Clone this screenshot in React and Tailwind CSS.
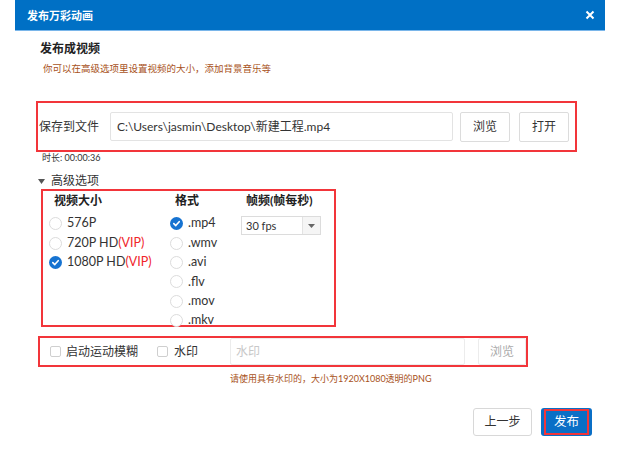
import React from "react";

const RED = "border-[#f2353a]";

function Radio({ checked }) {
  if (checked) {
    return (
      <span className="w-[13px] h-[13px] rounded-full bg-[#1673d1] flex items-center justify-center shrink-0">
        <svg width="9" height="9" viewBox="0 0 10 10">
          <path d="M2 5.2 L4.2 7.3 L8 3" stroke="white" strokeWidth="1.8" fill="none" strokeLinecap="round" strokeLinejoin="round" />
        </svg>
      </span>
    );
  }
  return <span className="w-[13px] h-[13px] rounded-full border border-[#dcdcdc] bg-white shrink-0" />;
}

function Row({ checked, children }) {
  return (
    <div className="h-[19.4px] flex items-center gap-[5px] text-[12.5px] text-[#333]">
      <Radio checked={checked} />
      <span className="leading-none">{children}</span>
    </div>
  );
}

export default function App() {
  return (
    <div
      className="w-[620px] h-[450px] bg-white overflow-hidden flex flex-col"
      style={{ fontFamily: 'Lato, "Noto Sans CJK SC", sans-serif' }}
    >
      {/* header */}
      <div className="mx-[15px] h-[31px] bg-[#0070c5] border-b border-[#7ab6ea] flex items-center justify-between pl-[12px] pr-[10px] shrink-0">
        <span className="text-white text-[11px] font-bold leading-none">发布万彩动画</span>
        <svg width="10" height="10" viewBox="0 0 10 10">
          <path d="M1.5 1.5 L8.5 8.5 M8.5 1.5 L1.5 8.5" stroke="white" strokeWidth="2" />
        </svg>
      </div>

      <div className="ml-[40px] mt-[9px] text-[12px] font-bold leading-[18px] text-[#222]">发布成视频</div>
      <div className="ml-[43px] mt-[3px] text-[9.5px] leading-[16px] text-[#a8521b]">
        你可以在高级选项里设置视频的大小，添加背景音乐等
      </div>

      {/* save box */}
      <div className={`ml-[36px] mt-[24px] w-[541px] h-[51px] border-2 ${RED} flex items-center pl-[1px] shrink-0`}>
        <span className="text-[12px] text-[#333] w-[71px] leading-none">保存到文件</span>
        <div className="w-[343px] h-[29px] border border-[#e3e3e3] rounded-[2px] flex items-center pl-[6px] text-[12px] text-[#333]">
          C:\Users\jasmin\Desktop\新建工程.mp4
        </div>
        <div className="ml-[7px] w-[50px] h-[30px] border border-[#dcdcdc] rounded-[2px] flex items-center justify-center text-[12px] text-[#333]">
          浏览
        </div>
        <div className="ml-[9px] w-[50px] h-[30px] border border-[#dcdcdc] rounded-[2px] flex items-center justify-center text-[12px] text-[#333]">
          打开
        </div>
      </div>

      <div className="ml-[42px] mt-0 text-[9px] leading-[12px] text-[#333]">时长: 00:00:36</div>

      <div className="ml-[38px] mt-[9px] flex items-center gap-[6px] h-[16px]">
        <svg width="7" height="5" viewBox="0 0 7 5">
          <path d="M0 0 L7 0 L3.5 5 Z" fill="#555" />
        </svg>
        <span className="text-[12px] text-[#333] leading-none">高级选项</span>
      </div>

      {/* advanced box */}
      <div className={`ml-[41px] w-[295px] h-[138px] border-2 ${RED} flex pl-[6px] shrink-0`}>
        <div className="w-[121px] flex flex-col">
          <div className="pl-[5px] pt-[2px] text-[12px] font-bold leading-[16px] text-[#222]">视频大小</div>
          <div className="mt-[5px]">
            <Row>576P</Row>
            <Row>
              720P HD<span className="text-[#f0262b]">(VIP)</span>
            </Row>
            <Row checked>
              1080P HD<span className="text-[#f0262b]">(VIP)</span>
            </Row>
          </div>
        </div>
        <div className="w-[71px] flex flex-col">
          <div className="pl-[5px] pt-[2px] text-[12px] font-bold leading-[16px] text-[#222]">格式</div>
          <div className="mt-[5px] flex flex-col">
            <Row checked>.mp4</Row>
            <Row>.wmv</Row>
            <Row>.avi</Row>
            <Row>.flv</Row>
            <Row>.mov</Row>
            <Row>.mkv</Row>
          </div>
        </div>
        <div className="flex flex-col">
          <div className="pl-[5px] pt-[2px] text-[12px] font-bold leading-[16px] text-[#222]">帧频(帧每秒)</div>
          <div className="mt-[7px] w-[80px] h-[19px] border border-[#dcdcdc] flex">
            <div className="flex-1 flex items-center pl-[4px] text-[11px] text-[#333] leading-none">30 fps</div>
            <div className="w-[18px] border-l border-[#e3e3e3] bg-[#f5f5f5] flex items-center justify-center">
              <svg width="7" height="4" viewBox="0 0 7 4">
                <path d="M0 0 L7 0 L3.5 4 Z" fill="#666" />
              </svg>
            </div>
          </div>
        </div>
      </div>

      {/* watermark box */}
      <div className={`ml-[38px] mt-[9px] w-[490px] h-[31px] border-2 ${RED} flex items-center shrink-0`}>
        <span className="ml-[10px] w-[11px] h-[11px] border border-[#cfcfcf] rounded-[2px]" />
        <span className="ml-[5px] text-[12px] text-[#333] leading-none">启动运动模糊</span>
        <span className="ml-[19px] w-[11px] h-[11px] border border-[#cfcfcf] rounded-[2px]" />
        <span className="ml-[6px] text-[12px] text-[#333] leading-none">水印</span>
        <div className="ml-[32px] w-[235px] h-[27px] border border-[#ececec] rounded-[2px] flex items-center pl-[5px] text-[12px] text-[#c8c8c8]">
          水印
        </div>
        <div className="ml-[13px] w-[48px] h-[27px] border border-[#ececec] rounded-[2px] flex items-center justify-center text-[12px] text-[#aaa]">
          浏览
        </div>
      </div>

      <div className="ml-[230px] mt-[5px] text-[9px] leading-[14px] text-[#a8521b]">
        请使用具有水印的，大小为1920X1080透明的PNG
      </div>

      <div className="mt-[22px] flex justify-end pr-[28px] gap-[9px]">
        <div className="w-[59px] h-[28px] border border-[#d8d8d8] rounded-[3px] flex items-center justify-center text-[12px] text-[#333]">
          上一步
        </div>
        <div className="w-[51px] h-[28px] bg-[#0a6fc6] rounded-[3px] px-[3px] py-[1px] flex">
          <div className={`flex-1 border-2 ${RED} flex items-center justify-center text-[12.5px] text-white`}>发布</div>
        </div>
      </div>
    </div>
  );
}
